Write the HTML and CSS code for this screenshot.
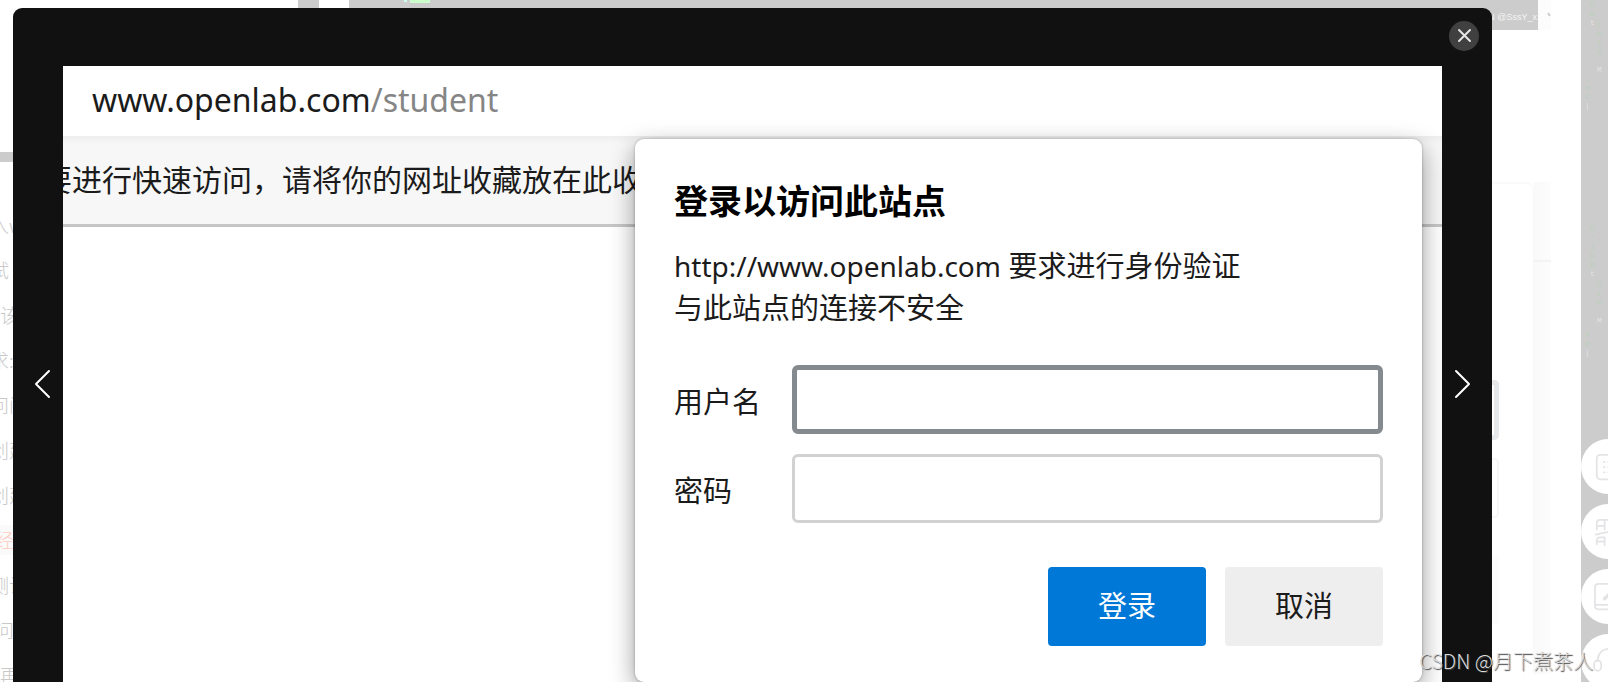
FILE: index.html
```
<!DOCTYPE html>
<html lang="zh-CN">
<head>
<meta charset="utf-8">
<title>openlab</title>
<link rel="stylesheet" href="styles.css">
</head>
<body>
<div class="page" aria-hidden="true">
  <div class="strip strip-a"></div>
  <div class="strip strip-b"><i class="mark mark-sm"></i><i class="mark"></i><span class="credit">CSDN @SssY_x</span></div>
  <div class="strip strip-c"></div>
  <div class="tabend"><svg width="4" height="6" viewBox="0 0 4 6"><path d="M1 1l2 3" stroke="#ccc" stroke-width="2"/></svg></div>
  <div class="article">
    <p class="in2">入www</p><p class="in2">试</p><p class="in1">该网</p><p class="in2">求:</p><p class="in2">问问</p><p class="in2">创建</p><p class="in2">创建</p><p class="hot in3">经</p><p class="in2">测试</p><p class="in3">问</p><p class="in1">再次</p>
  </div>
  <div class="ghost">
    <div class="ghost-card"><div class="ghost-field strong"></div><div class="ghost-field"></div><div class="ghost-btn"></div></div>
    <div class="ghost-side"></div>
  </div>
  <div class="rain">
    <p class="r1">U<br>B<br><b>t</b></p><p class="r2">i<br>o<br>1<br>0<br>:<br><b>M</b></p><p class="r3">:<br>k<br>L<br><b>|</b></p>
    <p class="r4">U<br>*<br>1<br>U<br>B<br><b>t</b></p><p class="r5">o<br>I<br>0<br>:<br><b>M</b></p><p class="r6">A<br>E<br><b>|</b></p>
  </div>
</div>

<main class="viewer">
  <button class="close" aria-label="关闭"><svg width="30" height="30" viewBox="0 0 30 30"><path d="M10 9l11 11M21 9l-11 11" stroke="#e6e6e6" stroke-width="2" stroke-linecap="round"/></svg></button>
  <button class="nav" aria-label="上一张"><svg width="18" height="30" viewBox="0 0 18 30"><path d="M16 2L3 15l13 13" fill="none" stroke="#fff" stroke-width="2" stroke-linecap="round" stroke-linejoin="round"/></svg></button>
  <section class="shot">
    <div class="address">www.openlab.com<span>/student</span></div>
    <div class="bookmarks"><span>要进行快速访问，请将你的网址收藏放在此收</span></div>
    <form class="dialog">
      <h1>登录以访问此站点</h1>
      <p class="message"><span>http://www.openlab.com</span> 要求进行身份验证<br>与此站点的连接不安全</p>
      <div class="fields">
        <label for="user">用户名</label><input class="focus" id="user" type="text">
        <label for="pass">密码</label><input id="pass" type="password">
      </div>
      <div class="actions"><button class="primary" type="button">登录</button><button type="button">取消</button></div>
    </form>
  </section>
  <button class="nav" aria-label="下一张"><svg width="18" height="30" viewBox="0 0 18 30"><path d="M2 2l13 13L2 28" fill="none" stroke="#fff" stroke-width="2" stroke-linecap="round" stroke-linejoin="round"/></svg></button>
</main>

<nav class="tools">
  <button aria-label="目录"><svg viewBox="0 0 32 32"><rect x="2" y="2" width="28" height="28" rx="4"/><path d="M10 10h1M15 10h1M20 10h1M10 16h1M15 16h1M20 16h1M10 22h1M15 22h1M20 22h1"/></svg></button>
  <button aria-label="助手"><svg viewBox="0 0 32 32"><path d="M2 13V6q0-4 4-4h20q4 0 4 4v7M11 3v10M4 9h7M18 9h11M1 19q14-5 30-2M2 30v-4q0-4 4-4h5v9M2 27h9M18 22v5q0 3 3 3h5q4 0 4-4v-3"/></svg></button>
  <button aria-label="写笔记"><svg viewBox="0 0 32 32"><path d="M30 14v16H4q-4 0-4-4V5q0-4 4-4h18M0 25h30"/><path stroke-width="4" d="M11 18L26 3"/></svg></button>
  <button aria-label="客服"><svg viewBox="0 0 32 32"><path d="M3 15V13Q5 1 16 1t13 12v2M28 25q-2 6-12 6"/><rect x="-1" y="14" width="8" height="12" rx="4"/><rect x="25" y="14" width="8" height="12" rx="4"/></svg></button>
</nav>
<div class="watermark">CSDN @月下煮茶人</div>
</body>
</html>
```

FILE: styles.css
```
* { box-sizing: border-box; }
body {
  margin: 0;
  height: 100vh;
  overflow: hidden;
  position: relative;
  background: #fff;
  color: #1b1b1b;
  font-family: "Noto Sans", "Noto Sans CJK SC", sans-serif;
}
button, input { font: inherit; }
p, h1 { margin: 0; }

/* dimmed page behind the viewer */
.page { position: absolute; inset: 0; overflow: hidden; }
.strip { position: absolute; background: #ccc; }
.strip-a { left: 298px; top: 0; width: 21px; height: 10px; }
.strip-b { left: 349px; right: 70px; top: 0; height: 30px; }
.strip-c { left: 0; top: 152px; width: 20px; height: 10px; }
.mark { position: absolute; left: 61px; top: 0; width: 20px; height: 3px; background: #cfc; }
.mark-sm { left: 55px; width: 3px; height: 2px; background: #cfe; }
.credit { position: absolute; right: 1px; top: 10px; font-size: 9px; line-height: 14px; color: #f4f4f4; font-family: "Liberation Sans", sans-serif; }
.tabend { position: absolute; right: 57px; top: 0; width: 13px; height: 30px; padding: 12px 0 0 9px; background: #fcfcfc; line-height: 0; }
.article { position: absolute; left: 0; top: 202px; width: 20px; overflow: hidden; color: #c8c8c8; font-size: 19px; line-height: 45px; white-space: nowrap; font-weight: 300; font-family: "Noto Sans CJK SC", sans-serif; }
.article p { height: 45px; }
.article .in1 { text-indent: 0; }
.article .in2 { text-indent: -10px; }
.article .in3 { text-indent: -5px; }
.article .hot { color: #ffccbf; background: linear-gradient(#fafafa, #fafafa) center / 100% 30px no-repeat; }
.ghost { position: absolute; right: 57px; top: 182px; bottom: 8px; width: 80px; display: flex; }
.ghost-card { flex: 1; border-right: 1px solid #f8f8f8; border-top: 2px solid #fafafa; border-radius: 0 8px 0 0; padding: 196px 34px 0 0; }
.ghost-side { width: 17px; background: linear-gradient(90deg, #f9f9f9, #fdfdfd); }
.ghost-side::before { content: ""; display: block; height: 78px; border-bottom: 2px solid #f3f3f3; }
.ghost-field { height: 60px; margin-bottom: 18px; border: 2px solid #f6f6f6; border-left: 0; border-radius: 0 5px 5px 0; }
.ghost-field.strong { border: 5px solid #e6e8ea; border-left: 0; }
.ghost-btn { margin-top: 38px; height: 68px; background: #fcfcfc; }
.rain { position: absolute; right: 0; top: 0; bottom: 0; width: 27px; background: #ccc; color: #bdd0bd; font: 8px/9px "Liberation Mono", monospace; }
.rain p { position: absolute; }
.rain b { color: #e2e2e2; font-weight: 400; }
.r1 { left: 9px; top: 0; } .r2 { left: 16px; top: 20px; } .r3 { left: 4px; top: 74px; }
.r4 { left: 9px; top: 224px; } .r5 { left: 16px; top: 280px; } .r6 { left: 4px; top: 330px; }

/* image viewer */
.viewer {
  position: absolute;
  inset: 8px 116px 0 13px;
  padding-top: 58px;
  display: grid;
  grid-template-columns: 50px 1fr 50px;
  background: #111;
  border-radius: 9px 9px 0 0;
}
.close { position: absolute; right: 13px; top: 13px; width: 30px; height: 30px; padding: 0; border: 0; border-radius: 50%; background: #404040; line-height: 0; }
.nav { border: 0; padding: 20px 0 0; background: none; line-height: 0; }
.nav svg { margin-left: 8px; }
.viewer > .nav:last-child svg { margin-left: -8px; }
.shot { position: relative; min-width: 0; background: #fff; overflow: hidden; }
.address { height: 70px; padding-left: 29px; font-size: 32px; line-height: 68px; }
.address span { color: #858585; }
.bookmarks { height: 91px; display: flex; border-bottom: 3px solid #c6c6c6; background: linear-gradient(#eee, #f7f7f7 8px); font-size: 30px; line-height: 88px; white-space: nowrap; }
.bookmarks span { margin-left: -21px; }
.dialog {
  position: absolute;
  right: 20px;
  top: 73px;
  width: 787px;
  height: 543px;
  padding: 37px 39px;
  background: #fff;
  border-radius: 9px;
  box-shadow: 0 0 3px #0004, 0 8px 24px #0006;
}
h1 { font-size: 34px; line-height: 48px; font-weight: 700; color: #000; font-family: "Noto Sans CJK SC", sans-serif; }
.message { margin-top: 21px; font-size: 29px; line-height: 42px; }
.message span { font-size: 28px; }
.fields { margin-top: 36px; display: grid; grid-template-columns: 118px 1fr; row-gap: 20px; align-items: center; font-size: 29px; }
.fields input { width: 100%; height: 69px; padding: 0 16px; border: 3px solid #d2d2d2; border-radius: 6px; background: #fff; outline: 0; }
.fields .focus { border: 5px solid #858a8f; }
.actions { margin-top: 44px; display: flex; justify-content: flex-end; gap: 19px; }
.actions button { width: 158px; height: 79px; padding: 0 0 5px; border: 0; border-radius: 4px; background: #eee; color: #1b1b1b; font-size: 29px; }
.actions .primary { background: #0078d7; color: #fff; }

/* floating tools cut by the window edge */
.tools { position: absolute; left: calc(100% - 27px); top: 439px; display: grid; gap: 10px; }
.tools button { width: 55px; height: 55px; padding: 0; border: 0; border-radius: 50%; background: #fff; display: grid; place-items: center; }
.tools svg { width: 28px; height: 28px; fill: none; stroke: #e4e4e7; stroke-width: 2; stroke-linecap: round; overflow: visible; }

.watermark { position: absolute; right: 15px; bottom: 7px; font: 300 20px/28px "Noto Sans CJK SC", sans-serif; color: #ddd; text-shadow: 1px 1px 1px #444; white-space: nowrap; }
```
